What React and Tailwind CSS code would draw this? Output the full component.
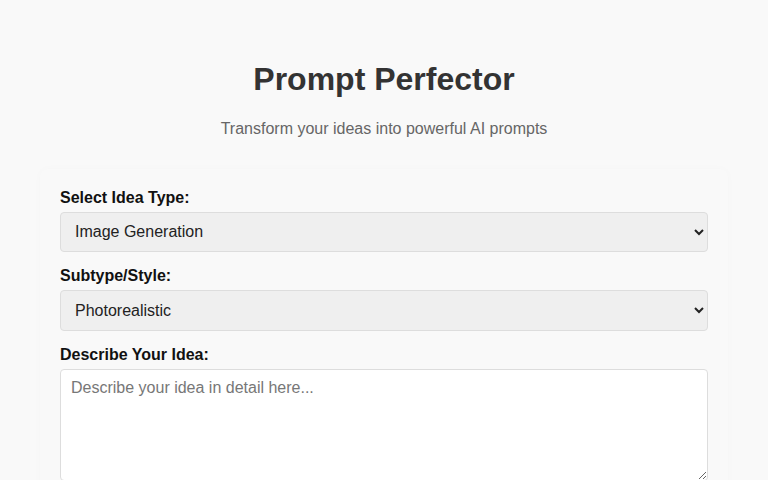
import React from "react";

export default function App() {
  return (
    <div className="min-h-screen bg-[#f9f9f9] text-[#333] font-['Liberation_Sans',Arial,sans-serif]">
      <div className="px-[40px] pt-[61px]">
        <h1 className="text-center text-[32px] leading-[37px] font-bold text-[#333]">Prompt Perfector</h1>
        <p className="mt-[22px] text-center text-[16px] leading-[18px] text-[#666]">
          Transform your ideas into powerful AI prompts
        </p>
        <div className="mt-[30.5px] rounded-[8px] bg-[#f9f9f9] shadow-[0_0_8px_rgba(0,0,0,0.02)] px-[20px] pt-[20px] pb-[20px]">
          <label className="block text-[16px] leading-[18px] font-bold text-[#111]">Select Idea Type:</label>
          <select
            defaultValue="image"
            className="mt-[5px] block w-full h-[40.5px] rounded-[4px] border border-[#ddd] bg-[#efefef] px-[10px] text-[16px] text-[#222]"
          >
            <option value="image">Image Generation</option>
            <option value="text">Text Generation</option>
          </select>
          <label className="mt-[15px] block text-[16px] leading-[18px] font-bold text-[#111]">Subtype/Style:</label>
          <select
            defaultValue="photo"
            className="mt-[5px] block w-full h-[40.5px] rounded-[4px] border border-[#ddd] bg-[#efefef] px-[10px] text-[16px] text-[#222]"
          >
            <option value="photo">Photorealistic</option>
            <option value="art">Artistic</option>
          </select>
          <label className="mt-[15px] block text-[16px] leading-[18px] font-bold text-[#111]">Describe Your Idea:</label>
          <textarea
            placeholder="Describe your idea in detail here..."
            className="mt-[5px] block w-full h-[112px] rounded-[4px] border border-[#ddd] bg-white px-[10px] py-[9px] text-[16px] leading-[18px] placeholder:text-[#777]"
          />
        </div>
      </div>
    </div>
  );
}
